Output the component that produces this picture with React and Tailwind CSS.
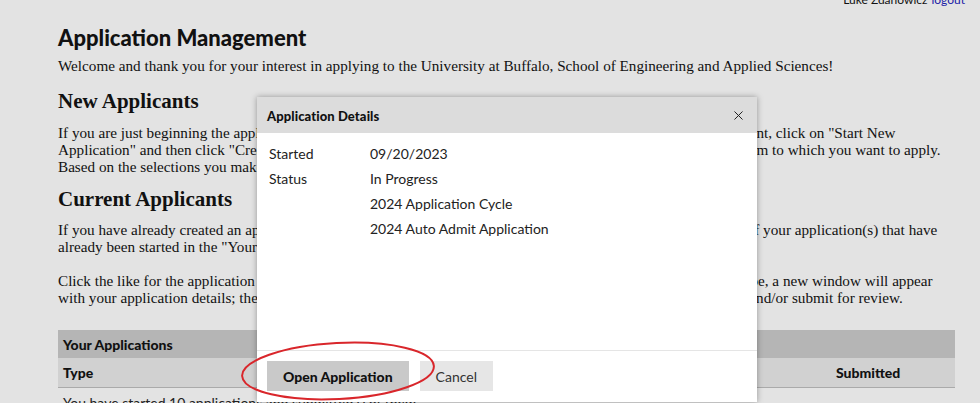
import React from "react";
import { X } from "lucide-react";

const serif = "font-['Liberation_Serif',serif]";
const geo = "font-['Lato','Liberation_Sans',sans-serif]";

const details = [
  { label: "Started", value: "09/20/2023" },
  { label: "Status", value: "In Progress" },
  { label: "", value: "2024 Application Cycle" },
  { label: "", value: "2024 Auto Admit Application" },
];

const ApplicationDetails = () => {
  return (
    <div className={`absolute left-[257px] top-[97px] w-[500px] h-[305px] bg-white shadow-[0_0_6px_rgba(0,0,0,0.35)] flex flex-col ${geo}`}>
      <div className="h-[36px] bg-[#dcdcdc] flex items-center justify-between pl-[10px] pr-[11px] pt-[4px]">
        <span className="text-[13px] font-black text-[#111] tracking-[0.1px]">Application Details</span>
        <X size={15} strokeWidth={1.6} className="text-[#222] -mt-[4px]" />
      </div>
      <div className="flex-1 pt-[8px] pl-[12px] text-[14px] text-[#222]">
        {details.map((row, i) => (
          <div key={i} className="flex h-[25px] items-center">
            <span className="w-[101px]">{row.label}</span>
            <span>{row.value}</span>
          </div>
        ))}
      </div>
      <div className="h-[52px] border-t border-[#e5e5e5] flex items-start gap-[11px] pt-[10px] pl-[10px]">
        <button className="h-[30px] px-[16px] bg-[#c9c9c9] text-[14px] font-black text-[#111]">
          Open Application
        </button>
        <button className="h-[30px] px-[16px] bg-[#e6e6e6] text-[14px] text-[#333]">
          Cancel
        </button>
      </div>
      <svg
        className="absolute left-[-19px] top-[242px]"
        width="200"
        height="66"
        viewBox="0 0 200 66"
      >
        <ellipse cx="100" cy="32" rx="96" ry="28" fill="none" stroke="#d9262b" strokeWidth="2" transform="rotate(-3 100 32)" />
      </svg>
    </div>
  );
};

const App = () => {
  return (
    <div className="relative w-[980px] h-[403px] overflow-hidden bg-[#e3e3e3] text-[#111]">
      <div className={`flex justify-end gap-[4px] pr-[15px] -mt-[9px] text-[12px] ${geo}`}>
        <span>Luke Zdanowicz</span>
        <span className="text-[#1a1aa6]">logout</span>
      </div>

      <div className="pl-[58px] pr-[25px] pt-[15px]">
        <h1 className={`text-[22px] font-black leading-[28px] ${geo}`}>Application Management</h1>
        <p className={`${serif} text-[15.2px] leading-[17px] mt-[5px]`}>
          Welcome and thank you for your interest in applying to the University at Buffalo, School of Engineering and Applied Sciences!
        </p>

        <h2 className={`${serif} text-[21px] font-bold leading-[24px] mt-[15px]`}>New Applicants</h2>
        <div className={`${serif} text-[15.2px] leading-[17px] mt-[11px] whitespace-nowrap`}>
          <div>If you are just beginning the application process and do not yet have any application in progress for this user account, click on "Start New</div>
          <div>Application" and then click "Create New Application" to select the admission term, the degree level and the program to which you want to apply.</div>
          <div>Based on the selections you make, the appropriate application will be created for you.</div>
        </div>

        <h2 className={`${serif} text-[21px] font-bold leading-[24px] mt-[12px]`}>Current Applicants</h2>
        <div className={`${serif} text-[15.2px] leading-[17px] mt-[10px] whitespace-nowrap`}>
          <div>If you have already created an application, you can log back in at any time to review or continue working on any of your application(s) that have</div>
          <div>already been started in the "Your Applications" section below.</div>
          <div className="h-[17px]"></div>
          <div>Click the like for the application you would like to work on in the table below. After clicking on the application type, a new window will appear</div>
          <div>with your application details; then you can open the application to view your information, continue working on it and/or submit for review.</div>
        </div>

        <div className={`mt-[24px] ${geo}`}>
          <div className="h-[28px] bg-[#b5b5b5] flex items-center pl-[5px] text-[14px] font-black">
            Your Applications
          </div>
          <div className="h-[30px] bg-[#d1d1d1] border-b border-[#aaa] flex items-center text-[14px] font-black">
            <span className="pl-[5px] flex-1">Type</span>
            <span className="w-[140px]">Created</span>
            <span className="w-[119px]">Submitted</span>
          </div>
          <div className="pl-[5px] pt-[4px] text-[14px] text-[#222]">
            You have started 10 applications and submitted 0 of them.
          </div>
        </div>
      </div>

      <ApplicationDetails />
    </div>
  );
};

export default App;
